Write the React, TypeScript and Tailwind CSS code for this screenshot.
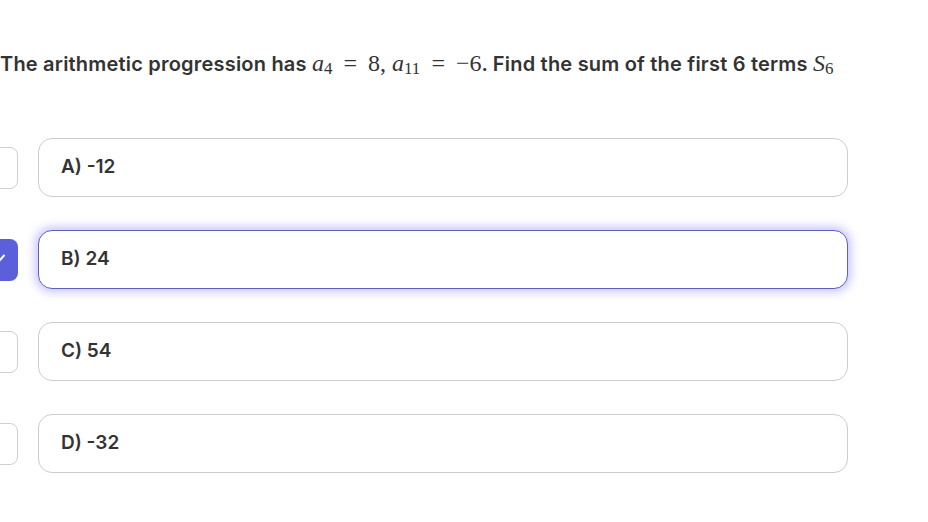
import React from "react";

const serif = '"Liberation Serif", serif';

const M = ({ children }: { children: React.ReactNode }) => (
  <span className="italic" style={{ fontFamily: serif }}>{children}</span>
);

const Sub = ({ children }: { children: React.ReactNode }) => (
  <sub className="not-italic text-[17px] relative top-[3px] align-baseline" style={{ fontFamily: serif }}>{children}</sub>
);

const options = [
  { label: "A) -12", selected: false },
  { label: "B) 24", selected: true },
  { label: "C) 54", selected: false },
  { label: "D) -32", selected: false },
];

export default function App() {
  return (
    <div className="w-[928px] h-[522px] bg-white overflow-hidden relative" style={{ fontFamily: 'Inter, "Open Sans", sans-serif' }}>
      <div className="pt-[48px] pl-0 text-[20px] tracking-[0.2px] font-semibold text-[#333333] whitespace-nowrap leading-[30px]">
        The arithmetic progression has{" "}
        <span className="font-normal text-[24px] tracking-normal" style={{ fontFamily: serif }}>
          <M>a</M><Sub>4</Sub>
          <span className="mx-[11px]">=</span>8,{" "}
          <M>a</M><Sub>11</Sub>
          <span className="mx-[11px]">=</span>−6
        </span>
        . Find the sum of the first 6 terms{" "}
        <span className="font-normal text-[24px] tracking-normal" style={{ fontFamily: serif }}>
          <M>S</M><Sub>6</Sub>
        </span>
      </div>
      <div className="mt-[59px] flex flex-col gap-[33px]">
        {options.map((o) => (
          <div key={o.label} className="flex items-center ml-[-22px] gap-[20px]">
            <div
              className={
                "w-[40px] h-[42px] rounded-[8px] flex items-center justify-center " +
                (o.selected ? "bg-[#5b5fd9]" : "border border-[#cfcfcf] bg-white")
              }
            >
              {o.selected && (
                <svg width="18" height="18" viewBox="0 0 18 18">
                  <path d="M3 9.5l4 4 8-9" stroke="white" strokeWidth="2" fill="none" strokeLinecap="round" strokeLinejoin="round" />
                </svg>
              )}
            </div>
            <div
              className={
                "w-[810px] h-[59px] rounded-[14px] flex items-center pl-[22px] text-[19px] font-semibold text-[#333333] bg-white " +
                (o.selected
                  ? "border-[1.5px] border-[#5f5fbd] shadow-[0_0_10px_3px_rgba(115,105,255,0.4)]"
                  : "border border-[#cccccc]")
              }
            >
              {o.label}
            </div>
          </div>
        ))}
      </div>
    </div>
  );
}
